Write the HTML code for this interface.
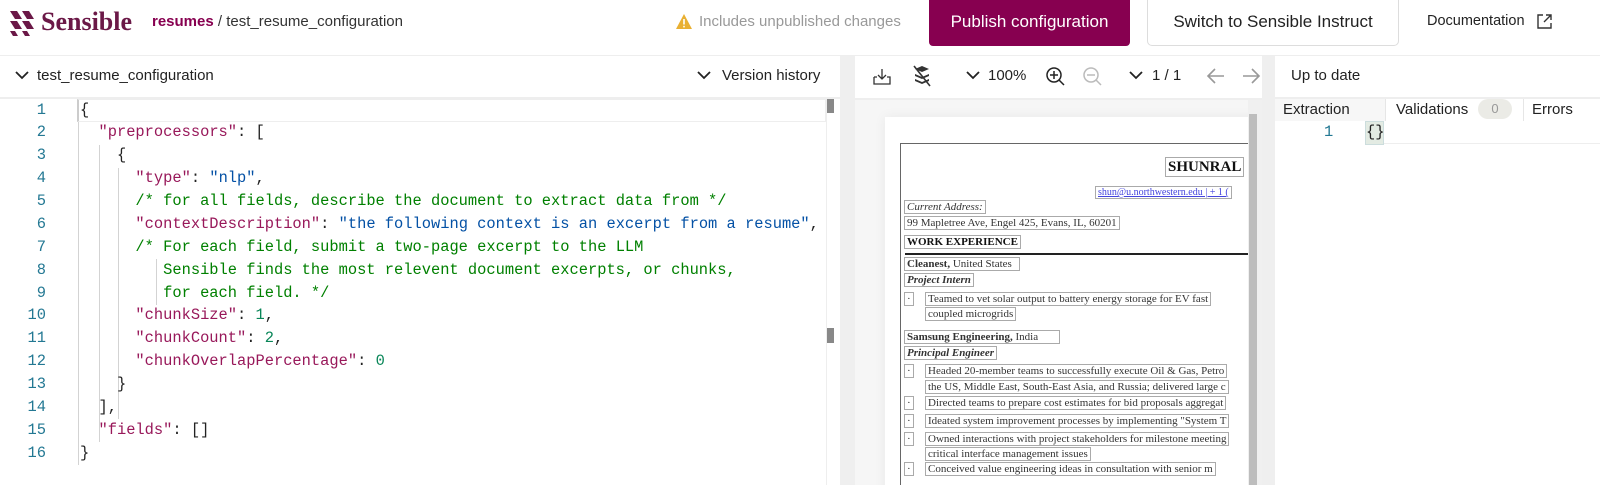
<!DOCTYPE html>
<html><head><meta charset="utf-8"><style>
*{margin:0;padding:0;box-sizing:border-box}
html,body{width:1600px;height:485px;overflow:hidden}
body{background:#fff;font-family:"Liberation Sans",sans-serif;position:relative;color:#222}
.a{position:absolute;white-space:nowrap}
.code{font-family:"Liberation Mono",monospace;font-size:15.4px;line-height:22.87px}
.ln{color:#237893;width:46px;text-align:right;left:0}
.k{color:#98185a}
.s{color:#0451a5}
.c{color:#008000}
.n{color:#098658}
.g{position:absolute;border-left:1px solid #d3d3d3;width:0}
.pdf{font-family:"Liberation Serif",serif;font-size:11px;color:#333}
.bx{position:absolute;border:1.5px solid #aaa;white-space:nowrap;line-height:12px;padding:0 2px}
</style></head><body>
<!-- header -->
<svg class="a" style="left:8px;top:9px" width="28" height="28" viewBox="0 0 28 28"><g fill="#6b1847"><path d="M2 2h7l5 8H7z"/><path d="M14 2h7l5 8h-7z"/><path d="M2 12h7l5 8H7z"/><path d="M14 12h7l5 8h-7z"/><path d="M2 22h5l3 5H5z"/><path d="M14 22h5l3 5h-5z"/></g></svg>
<div class="a" style="left:41px;top:7px;font-family:'Liberation Serif',serif;font-weight:bold;font-size:26px;color:#6b1847">Sensible</div>
<div class="a" style="left:152px;top:13px;font-size:15px;color:#333"><span style="color:#870050;font-weight:bold">resumes</span> / test_resume_configuration</div>
<svg class="a" style="left:675px;top:13px" width="18" height="17" viewBox="0 0 18 17"><path d="M9 1L17 16H1z" fill="#e9b033"/><rect x="8.2" y="6" width="1.6" height="5.5" fill="#fff"/><rect x="8.2" y="12.8" width="1.6" height="1.6" fill="#fff"/></svg>
<div class="a" style="left:699px;top:13px;font-size:15px;color:#999">Includes unpublished changes</div>
<div class="a" style="left:929px;top:0;width:201px;height:46px;background:#870050;border-radius:0 0 4px 4px;color:#fff;font-size:17px;text-align:center;line-height:44px">Publish configuration</div>
<div class="a" style="left:1147px;top:0;width:252px;height:46px;border:1px solid #ddd;border-top:none;border-radius:0 0 5px 5px;font-size:17px;text-align:center;line-height:44px;color:#222">Switch to Sensible Instruct</div>
<div class="a" style="left:1427px;top:13px;font-size:14.5px;color:#222">Documentation</div>
<svg class="a" style="left:1536px;top:13px" width="17" height="17" viewBox="0 0 17 17" fill="none" stroke="#333" stroke-width="1.4"><path d="M7 2H2v13h13v-5"/><path d="M10 2h5v5M15 2L8 9"/></svg>
<div class="a" style="left:0;top:55px;width:1600px;height:1px;background:#eee"></div>
<!-- left toolbar -->
<svg class="a" style="left:15px;top:70px" width="14" height="10" viewBox="0 0 14 10"><path d="M1 2l6 6 6-6" fill="none" stroke="#222" stroke-width="1.8"/></svg>
<div class="a" style="left:37px;top:67px;font-size:15px">test_resume_configuration</div>
<svg class="a" style="left:697px;top:70px" width="14" height="10" viewBox="0 0 14 10"><path d="M1 2l6 6 6-6" fill="none" stroke="#222" stroke-width="1.8"/></svg>
<div class="a" style="left:722px;top:67px;font-size:15px">Version history</div>
<div class="a" style="left:0;top:97px;width:840px;height:2px;background:#eee"></div>
<!-- gutters -->
<div class="a" style="left:840px;top:56px;width:15px;height:429px;background:#efefef"></div>
<div class="a" style="left:1262px;top:56px;width:13px;height:429px;background:#efefef"></div>
<!-- code -->
<div class="a" style="left:77px;top:99px;width:749px;height:23px;border:1px solid #eee;border-left:2px solid #ccc"></div>
<div class="g" style="left:78px;top:122px;height:343px"></div>
<div class="g" style="left:99px;top:145px;height:297px"></div>
<div class="g" style="left:118px;top:168px;height:251px"></div>
<div class="g" style="left:156px;top:259px;height:46px"></div>
<div class="a" style="left:826px;top:99px;width:10px;height:386px;border-left:1px solid #eee"></div>
<div class="a" style="left:827px;top:99px;width:7px;height:14px;background:#888"></div>
<div class="a" style="left:827px;top:328px;width:7px;height:15px;background:#888"></div>
<div class="a code ln" style="top:98.5px">1<br>2<br>3<br>4<br>5<br>6<br>7<br>8<br>9<br>10<br>11<br>12<br>13<br>14<br>15<br>16</div>
<div class="a" style="left:80px;top:98.5px;width:746px;height:380px;overflow:hidden">
<pre class="code" style="white-space:pre;color:#222;margin:0">{
  <span class="k">"preprocessors"</span>: [
    {
      <span class="k">"type"</span>: <span class="s">"nlp"</span>,
      <span class="c">/* for all fields, describe the document to extract data from */</span>
      <span class="k">"contextDescription"</span>: <span class="s">"the following context is an excerpt from a resume"</span>,
      <span class="c">/* For each field, submit a two-page excerpt to the LLM</span>
<span class="c">         Sensible finds the most relevent document excerpts, or chunks,</span>
<span class="c">         for each field. */</span>
      <span class="k">"chunkSize"</span>: <span class="n">1</span>,
      <span class="k">"chunkCount"</span>: <span class="n">2</span>,
      <span class="k">"chunkOverlapPercentage"</span>: <span class="n">0</span>
    }
  ],
  <span class="k">"fields"</span>: []
}</pre></div>
<!-- pdf toolbar -->
<svg class="a" style="left:872px;top:66px" width="20" height="20" viewBox="0 0 20 20" fill="none" stroke="#333" stroke-width="1.3"><path d="M10 3v10M6 9l4 4 4-4"/><path d="M2 11v7h16v-7h-3M5 11H2"/></svg>
<svg class="a" style="left:912px;top:65px" width="20" height="22" viewBox="0 0 20 22" fill="#333"><path d="M3 4l7-3 7 3-7 3z"/><path d="M3 9l7 3 7-3v2l-7 3-7-3z"/><path d="M3 14l7 3 7-3v2l-7 3-7-3z"/><path d="M2 1l16 20" stroke="#333" stroke-width="1.6"/></svg>
<svg class="a" style="left:966px;top:70px" width="14" height="10" viewBox="0 0 14 10"><path d="M1 2l6 6 6-6" fill="none" stroke="#222" stroke-width="1.8"/></svg>
<div class="a" style="left:988px;top:67px;font-size:15px">100%</div>
<svg class="a" style="left:1045px;top:66px" width="22" height="22" viewBox="0 0 22 22" fill="none" stroke="#222" stroke-width="1.5"><circle cx="9" cy="9" r="7"/><path d="M9 5v8M5 9h8M14 14l5 5"/></svg>
<svg class="a" style="left:1082px;top:66px" width="22" height="22" viewBox="0 0 22 22" fill="none" stroke="#bbb" stroke-width="1.5"><circle cx="9" cy="9" r="7"/><path d="M5 9h8M14 14l5 5"/></svg>
<svg class="a" style="left:1129px;top:70px" width="14" height="10" viewBox="0 0 14 10"><path d="M1 2l6 6 6-6" fill="none" stroke="#222" stroke-width="1.8"/></svg>
<div class="a" style="left:1152px;top:67px;font-size:15px">1 / 1</div>
<svg class="a" style="left:1206px;top:67px" width="20" height="18" viewBox="0 0 20 18" fill="none" stroke="#999" stroke-width="1.6"><path d="M18 9H2M9 2L2 9l7 7"/></svg>
<svg class="a" style="left:1241px;top:67px" width="20" height="18" viewBox="0 0 20 18" fill="none" stroke="#999" stroke-width="1.6"><path d="M2 9h16M11 2l7 7-7 7"/></svg>
<div class="a" style="left:855px;top:98px;width:407px;height:2px;background:#eee"></div>
<!-- pdf area -->
<div class="a" style="left:855px;top:100px;width:407px;height:385px;background:#f6f6f6;overflow:hidden">
 <div class="a" style="left:30px;top:17px;width:400px;height:400px;background:#fff;box-shadow:0 0 12px rgba(0,0,0,.06)"></div>
 <div class="a" style="left:45px;top:43px;width:360px;height:400px;border:1px solid #666;border-right:none;background:#fff"></div>
 <div class="pdf">
  <div class="bx" style="left:310px;top:57px;font-size:15px;font-weight:bold;line-height:18px;color:#111">SHUNRAL</div>
  <div class="bx" style="left:240px;top:86px;color:#44d;text-decoration:underline;font-size:10px;line-height:11px">shun@u.northwestern.edu | + 1 (</div>
  <div class="bx" style="left:49px;top:100px;font-style:italic">Current Address:</div>
  <div class="bx" style="left:49px;top:116px">99 Mapletree Ave, Engel 425, Evans, IL, 60201</div>
  <div class="bx" style="left:49px;top:135px;font-weight:bold;color:#111">WORK EXPERIENCE</div>
  <div class="a" style="left:50px;top:153px;width:360px;height:1.5px;background:#222"></div>
  <div class="bx" style="left:49px;top:157px"><b>Cleanest,</b> United States&nbsp;&nbsp;</div>
  <div class="bx" style="left:49px;top:173px;font-weight:bold;font-style:italic">Project Intern</div>
  <div class="bx" style="left:49px;top:192px">·</div><div class="bx" style="left:70px;top:192px">Teamed to vet solar output to battery energy storage for EV fast</div>
  <div class="bx" style="left:70px;top:207px">coupled microgrids</div>
  <div class="bx" style="left:49px;top:230px"><b>Samsung Engineering,</b> India&nbsp;&nbsp;&nbsp;&nbsp;&nbsp;&nbsp;&nbsp;</div>
  <div class="bx" style="left:49px;top:246px;font-weight:bold;font-style:italic">Principal Engineer</div>
  <div class="bx" style="left:49px;top:264px">·</div><div class="bx" style="left:70px;top:264px">Headed 20-member teams to successfully execute Oil &amp; Gas, Petro</div>
  <div class="bx" style="left:70px;top:280px">the US, Middle East, South-East Asia, and Russia; delivered large c</div>
  <div class="bx" style="left:49px;top:296px">·</div><div class="bx" style="left:70px;top:296px">Directed teams to prepare cost estimates for bid proposals aggregat</div>
  <div class="bx" style="left:49px;top:314px">·</div><div class="bx" style="left:70px;top:314px">Ideated system improvement processes by implementing "System T</div>
  <div class="bx" style="left:49px;top:332px">·</div><div class="bx" style="left:70px;top:332px">Owned interactions with project stakeholders for milestone meeting</div>
  <div class="bx" style="left:70px;top:347px">critical interface management issues</div>
  <div class="bx" style="left:49px;top:362px">·</div><div class="bx" style="left:70px;top:362px">Conceived value engineering ideas in consultation with senior m</div>
 </div>
 <div class="a" style="left:393px;top:0;width:14px;height:385px;background:#f0f0f0"></div>
 <div class="a" style="left:394px;top:14px;width:8px;height:371px;background:#bdbdbd"></div>
</div>
<!-- right panel -->
<div class="a" style="left:1291px;top:67px;font-size:15px">Up to date</div>
<div class="a" style="left:1275px;top:97px;width:325px;height:2px;background:#eee"></div>
<div class="a" style="left:1275px;top:99px;width:110px;height:22px;background:#f7f7f7"></div>
<div class="a" style="left:1385px;top:99px;width:1px;height:22px;background:#e6e6e6"></div>
<div class="a" style="left:1523px;top:99px;width:1px;height:22px;background:#e6e6e6"></div>
<div class="a" style="left:1283px;top:101px;font-size:15px">Extraction</div>
<div class="a" style="left:1396px;top:101px;font-size:15px">Validations</div>
<div class="a" style="left:1478px;top:99px;width:34px;height:20px;border-radius:10px;background:#ebebe6;color:#999;font-size:13px;text-align:center;line-height:20px">0</div>
<div class="a" style="left:1532px;top:101px;font-size:15px">Errors</div>
<div class="a" style="left:1366px;top:122px;width:234px;height:22px;border-bottom:1px solid #eee"></div>
<div class="a" style="left:1365px;top:121px;width:19px;height:24px;background:#e3ebe3;border:1px solid #cdd"></div>
<div class="a code" style="left:1324px;top:121px;color:#237893">1</div>
<div class="a code" style="left:1366px;top:121px;color:#222">{}</div>
</body></html>
